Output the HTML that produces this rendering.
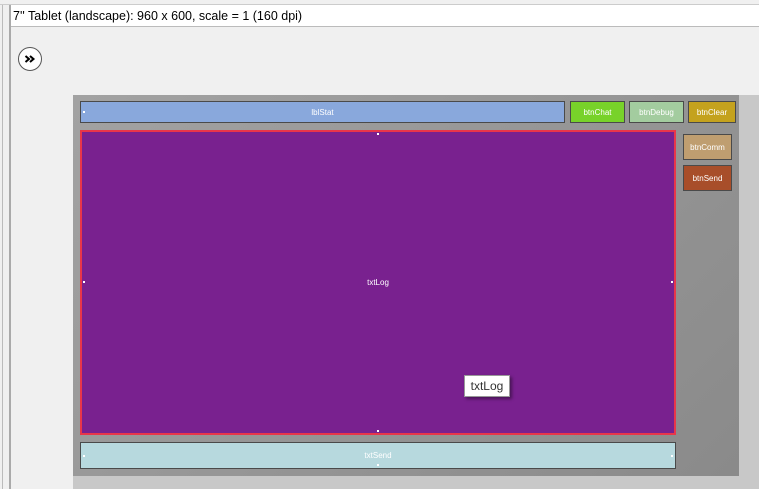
<!DOCTYPE html>
<html><head><style>
body{margin:0;width:759px;height:489px;overflow:hidden;background:#f0f0f0;font-family:"Liberation Sans",sans-serif;position:relative}
div{position:absolute;box-sizing:border-box}
.b{border:1px solid #4a4a4a;color:#fff;font-size:8px;display:flex;align-items:center;justify-content:center}
.d{width:2px;height:2px;background:#fff}
</style></head><body>
<div style="left:0;top:0;width:759px;height:5px;background:#f0f0f0;border-bottom:1px solid #ccc"></div>
<div style="left:10px;top:5px;width:749px;height:22px;background:#fff;border-bottom:1px solid #bbb;font-size:12.5px;line-height:22px;padding-left:3px;color:#000">7'' Tablet (landscape): 960 x 600, scale = 1 (160 dpi)</div>
<div style="left:0;top:5px;width:3px;height:484px;border-right:1px solid #bbb"></div>
<div style="left:9px;top:5px;width:2px;height:484px;background:#aaa"></div>
<div style="left:18px;top:47px;width:24px;height:24px;border-radius:50%;border:1px solid #555;background:#fff"><svg width="22" height="22" style="position:absolute;left:0;top:0"><path d="M6.5 8 L10 11 L6.5 14 M11 8 L14.5 11 L11 14" stroke="#000" stroke-width="2" fill="none"/></svg></div>
<div style="left:73px;top:95px;width:686px;height:394px;background:#c8c8c8"></div>
<div style="left:73px;top:95px;width:666px;height:381px;background:linear-gradient(135deg,#a2a2a2,#8a8a8a)"></div>
<div class="b" style="left:80px;top:101px;width:485px;height:22px;background:#89a8dc">lblStat</div>
<div class="b" style="left:570px;top:101px;width:55px;height:22px;background:#78d22a">btnChat</div>
<div class="b" style="left:629px;top:101px;width:55px;height:22px;background:#a3cc9f">btnDebug</div>
<div class="b" style="left:688px;top:101px;width:48px;height:22px;background:#c4a21e">btnClear</div>
<div class="b" style="left:683px;top:134px;width:49px;height:26px;background:#bf9e70">btnComm</div>
<div class="b" style="left:683px;top:165px;width:49px;height:26px;background:#a84e2a">btnSend</div>
<div class="b" style="left:80px;top:130px;width:596px;height:305px;background:#79218f;border:2px solid #e8364a">txtLog</div>
<div class="b" style="left:80px;top:442px;width:596px;height:27px;background:#b7d9de">txtSend</div>
<div class="d" style="left:83px;top:111px"></div>
<div class="d" style="left:377px;top:133px"></div>
<div class="d" style="left:83px;top:281px"></div>
<div class="d" style="left:671px;top:281px"></div>
<div class="d" style="left:377px;top:430px"></div>
<div class="d" style="left:83px;top:455px"></div>
<div class="d" style="left:671px;top:455px"></div>
<div class="d" style="left:377px;top:464px"></div>
<div style="left:464px;top:375px;width:46px;height:22px;background:#fff;border:1px solid #999;box-shadow:2px 2px 3px rgba(0,0,0,.4);font-size:12px;color:#333;display:flex;align-items:center;justify-content:center">txtLog</div>
</body></html>
